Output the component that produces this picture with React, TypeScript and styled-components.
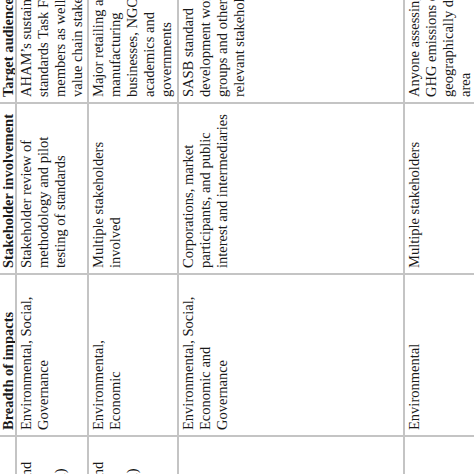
import styled, { createGlobalStyle } from "styled-components";

interface IRow {
    height: number,
    scheme: string[],
    breadth: string[],
    stakeholders: string[],
    audience: string[],
}

const GlobalStyle = createGlobalStyle`
    html, body {
        margin: 0;
        padding: 0;
        background: #ffffff;
    }
`;

const headers = ["Scheme", "Breadth of impacts", "Stakeholder involvement", "Target audience"];

const rows: IRow[] = [
    {
        height: 72,
        scheme: ["Voluntary standard and", "certification", "(product certification)"],
        breadth: ["Environmental, Social,", "Governance"],
        stakeholders: ["Stakeholder review of", "methodology and pilot", "testing of standards"],
        audience: ["AHAM’s sustainability", "standards Task Force", "members as well as", "value chain stakeholders"],
    },
    {
        height: 90,
        scheme: ["Voluntary standard and", "benchmark", "(product certification)"],
        breadth: ["Environmental,", "Economic"],
        stakeholders: ["Multiple stakeholders", "involved"],
        audience: ["Major retailing and", "manufacturing", "businesses, NGOs,", "academics and", "governments"],
    },
    {
        height: 226,
        scheme: ["SASB standards"],
        breadth: ["Environmental, Social,", "Economic and", "Governance"],
        stakeholders: ["Corporations, market", "participants, and public", "interest and intermediaries"],
        audience: ["SASB standard", "development working", "groups and other", "relevant stakeholders"],
    },
    {
        height: 110,
        scheme: ["GPC protocol"],
        breadth: ["Environmental"],
        stakeholders: ["Multiple stakeholders"],
        audience: ["Anyone assessing", "GHG emissions of a", "geographically defined", "area"],
    },
];

const App = () => {
    return (
        <Viewport>
            <GlobalStyle />
            <Rotated>
                <Table>
                    {headers.map((title) => (
                        <Cell key={title} $height={30} $head>
                            <Line>{title}</Line>
                        </Cell>
                    ))}
                    {rows.map((row, index) => (
                        [row.scheme, row.breadth, row.stakeholders, row.audience].map((lines, col) => (
                            <Cell key={`${index}-${col}`} $height={row.height}>
                                {lines.map((text) => (
                                    <Line key={text}>{text}</Line>
                                ))}
                            </Cell>
                        ))
                    ))}
                </Table>
            </Rotated>
        </Viewport>
    );
};

export default App;

const Viewport = styled.div`
    width: 474px;
    height: 474px;
    overflow: hidden;
    background: #ffffff;
`;

const Rotated = styled.div`
    display: flow-root;
    width: 474px;
    height: 474px;
    transform: rotate(-90deg);
    transform-origin: 50% 50%;
`;

const Table = styled.div`
    display: grid;
    grid-template-columns: 166px 162px 171px 200px;
    margin-left: -127px;
    margin-top: -13px;
    font-family: "Liberation Serif", "Times New Roman", serif;
    font-size: 14.5px;
    line-height: 17px;
    color: #1a1a1a;
`;

const Cell = styled.div<{ $height: number, $head?: boolean }>`
    box-sizing: border-box;
    height: ${(p) => p.$height}px;
    border-right: 2px solid #c4c4c4;
    border-bottom: 2px solid #c4c4c4;
    padding: ${(p) => (p.$head ? "0 5px 0 5px" : "1px 5px 0 5px")};
    display: flex;
    flex-direction: column;
    justify-content: ${(p) => (p.$head ? "flex-end" : "flex-start")};
    font-weight: ${(p) => (p.$head ? 700 : 400)};
    line-height: ${(p) => (p.$head ? "13px" : "17px")};
    overflow: hidden;
`;

const Line = styled.div`
    white-space: nowrap;
`;
